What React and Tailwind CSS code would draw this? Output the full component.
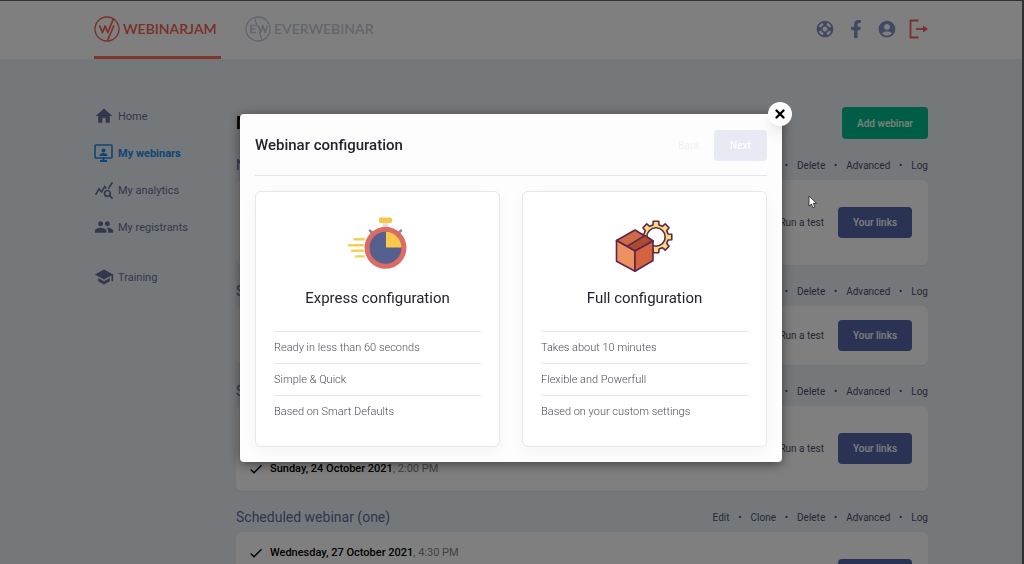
import { useState } from 'react';
import { X } from 'lucide-react';
import { FaFacebookF } from 'react-icons/fa';
import {
    MdHome,
    MdQueryStats,
    MdGroup,
    MdSchool,
    MdAccountCircle,
    MdSupport,
    MdCheck
} from 'react-icons/md';

const PresenterIcon = ({ className }) => (
    <svg className={className} viewBox="0 0 20 20" fill="none" stroke="currentColor">
        <rect x="1" y="2" width="17" height="13" rx="1" strokeWidth="1.6" />
        <circle cx="9.5" cy="7.4" r="2" fill="currentColor" stroke="none" />
        <path d="M5.5 13c0-2 2-3 4-3s4 1 4 3z" fill="currentColor" stroke="none" />
        <path d="M9.5 14v4M6 18h7" strokeWidth="2" />
    </svg>
);

const LogoutIcon = ({ className }) => (
    <svg className={className} viewBox="0 0 20 20" fill="none" stroke="currentColor" strokeWidth="1.8">
        <path d="M10.5 1.5h-8v17h8" strokeLinejoin="round" />
        <path d="M8 10h8" />
        <path d="M15 6.5l5 3.5-5 3.5z" fill="currentColor" stroke="none" />
    </svg>
);

const StopwatchIcon = () => (
    <svg className="h-14 w-16" viewBox="0 0 64 56">
        <g stroke="#f3cf56" strokeWidth="2.4" strokeLinecap="round">
            <path d="M8.5 23.3h9" />
            <path d="M3 29.3h14" />
            <path d="M6 34.8h11" />
            <path d="M10 40.4h7.5" />
        </g>
        <path d="M24 14.6l3 3M55 14.6l-3 3" stroke="#7d88a6" strokeWidth="2.6" strokeLinecap="round" />
        <rect x="36.6" y="5" width="5.8" height="7" fill="#e3dfe2" />
        <rect x="33" y="1.4" width="13" height="5.6" rx="1.6" fill="#f5c84c" />
        <circle cx="39.5" cy="31.8" r="21" fill="#dd6a63" />
        <circle cx="39.5" cy="31.8" r="16" fill="#56608f" />
        <path d="M40 31.4V15.8a16 16 0 0 1 15.5 15.6z" fill="#fbc84b" />
    </svg>
);

// eight square teeth around a ring
const gearPoints = () => {
    const points = [];
    for (let i = 0; i < 8; i++) {
        const base = (i * Math.PI) / 4 - Math.PI / 2;
        [[-0.25, 12.4], [-0.17, 16], [0.17, 16], [0.25, 12.4]].forEach(([offset, r]) => {
            points.push(`${43 + r * Math.cos(base + offset)},${21 + r * Math.sin(base + offset)}`);
        });
    }
    return points.join(' ');
};

const BoxIcon = () => (
    <svg className="h-14 w-16" viewBox="0 0 64 56" stroke="#5d2650" strokeWidth="1.6" strokeLinejoin="round">
        <polygon points={gearPoints()} fill="#fbdc77" />
        <circle cx="43" cy="21" r="9.2" fill="#fff" />
        <path d="M22 14L3.5 24.5 22 35l18-10z" fill="#cf6a43" />
        <path d="M32 19.4L14 30.5 22 35l18-10z" fill="#b04a2c" />
        <path d="M3.5 24.5v20.7L22 55.2V35z" fill="#ee9160" />
        <path d="M40 25v19.5L22 55.2V35z" fill="#d5633f" />
    </svg>
);

const LogoMark = ({ letters, className }) => (
    <svg className={className} viewBox="0 0 26 26" fill="none" stroke="currentColor">
        <circle cx="13" cy="13" r="12" strokeWidth="1.3" />
        {letters === 'W' ? (
            <>
                <path d="M5.5 9.5l3 7 2.7-6.5 2.6 6.5 5.7-14" strokeWidth="1.8" strokeLinejoin="round" />
                <path d="M13.5 24.5l6.5-15" strokeWidth="1.6" />
            </>
        ) : (
            <>
                <path d="M10.5 9.5H6v7h5M6 13h4.5" strokeWidth="1.7" />
                <path d="M13.5 9.5l2.2 7 2.2-7 2.2 7 2.2-7" strokeWidth="1.5" strokeLinejoin="round" />
                <path d="M9.5 2l3 9M14 16l3 8" strokeWidth="1.2" />
            </>
        )}
    </svg>
);

const navItems = [
    { label: 'Home', icon: MdHome },
    { label: 'My webinars', icon: PresenterIcon, active: true },
    { label: 'My analytics', icon: MdQueryStats },
    { label: 'My registrants', icon: MdGroup },
    { label: 'Training', icon: MdSchool, spaced: true }
];

const webinars = [
    { name: 'New product', dates: [['Friday, 22 October 2021', '1:00 PM']], tall: true },
    { name: 'Series', dates: [['Saturday, 23 October 2021', '5:00 PM']] },
    { name: 'Sales', dates: [['Saturday, 23 October 2021', '2:00 PM'], ['Saturday, 23 October 2021', '6:00 PM'], ['Sunday, 24 October 2021', '2:00 PM']] },
    { name: 'Scheduled webinar (one)', dates: [['Wednesday, 27 October 2021', '4:30 PM']], tall: true }
];

const actions = ['Edit', 'Clone', 'Delete', 'Advanced', 'Log'];

const options = [
    {
        title: 'Express configuration',
        icon: StopwatchIcon,
        features: ['Ready in less than 60 seconds', 'Simple & Quick', 'Based on Smart Defaults']
    },
    {
        title: 'Full configuration',
        icon: BoxIcon,
        features: ['Takes about 10 minutes', 'Flexible and Powerfull', 'Based on your custom settings']
    }
];

const Header = () => (
    <header className="bg-white px-4">
        <div className="mx-auto flex h-[58px] max-w-[834px] justify-between">
            <nav className="flex gap-6">
                <a href="#webinarjam" className="flex w-[127px] items-center gap-[3px] border-b-3 border-[#ff6a5c] font-[Lato] text-sm font-semibold text-[#f0604f]">
                    <LogoMark letters="W" className="h-[26px] w-[26px] shrink-0" />
                    WEBINARJAM
                </a>
                <a href="#everwebinar" className="flex items-center gap-[3px] border-b-3 border-transparent font-[Lato] text-sm font-semibold text-[#c6cadd]">
                    <LogoMark letters="EW" className="h-[26px] w-[26px] shrink-0" />
                    EVERWEBINAR
                </a>
            </nav>
            <div className="flex items-center gap-[11px] pb-0.5 text-[#8090c8]">
                <a href="#support" aria-label="Support"><MdSupport className="h-5 w-5" /></a>
                <a href="#facebook" aria-label="Facebook" className="flex w-5 justify-center"><FaFacebookF className="h-[18px] w-[18px]" /></a>
                <a href="#account" aria-label="Account"><MdAccountCircle className="h-5 w-5" /></a>
                <a href="#logout" aria-label="Log out" className="text-[#f0605c]"><LogoutIcon className="h-5 w-5" /></a>
            </div>
        </div>
    </header>
);

const Sidebar = () => (
    <nav className="w-[142px] shrink-0 pt-[39px]">
        <ul>
            {navItems.map(({ label, icon: Icon, active, spaced }) => (
                <li key={label} className={spaced ? 'mt-[13px]' : ''}>
                    <a
                        href="#"
                        className={`flex h-[37px] items-center gap-1 text-[11px] ${active ? 'font-bold text-[#1c8ae6]' : 'text-[#666f96]'}`}
                    >
                        <Icon className="mb-0.5 h-5 w-5" />
                        <span className="pt-0.5">{label}</span>
                    </a>
                </li>
            ))}
        </ul>
    </nav>
);

const WebinarRow = ({ name, dates, tall }) => (
    <section>
        <div className="flex h-[41px] items-center justify-between pt-[11px]">
            <h2 className="text-sm text-[#5d6aa0]">{name}</h2>
            <ul className="flex text-[10px] text-[#4a4f6c]">
                {actions.map((action, i) => (
                    <li key={action} className="flex">
                        {i > 0 && <span className="w-[21px] text-center">•</span>}
                        <a href="#">{action}</a>
                    </li>
                ))}
            </ul>
        </div>
        <div className={`flex items-center justify-between rounded-md bg-white px-4 shadow-xs ${tall ? 'min-h-[85px]' : 'min-h-[59px]'}`}>
            <ul className="-ml-1 self-start py-[11px]">
                {dates.map(([day, time]) => (
                    <li key={day + time} className="flex h-[21px] items-center gap-[6px] text-[11px] text-[#85858c]">
                        <MdCheck className="mb-0.5 h-4 w-4 text-black" />
                        <span><b className="font-medium text-black">{day}</b>, {time}</span>
                    </li>
                ))}
            </ul>
            <div className="flex items-center gap-[14px] text-[10px]">
                <a href="#" className="text-[#4a4f6c]">Run a test</a>
                <button className="h-[31px] w-[74px] rounded-sm bg-[#5466a8] font-medium text-white">Your links</button>
            </div>
        </div>
    </section>
);

const ConfigModal = ({ onClose }) => (
    <div className="fixed inset-0 flex items-start justify-center bg-black/50 pt-[114px] pr-[18px] pl-4">
        <div role="dialog" aria-label="Webinar configuration" className="relative w-full max-w-[542px] rounded-sm bg-[#fdfdfe] px-[15px] pb-[15px] shadow-[0_2px_12px_rgba(0,0,0,0.5)]">
            <button
                aria-label="Close"
                onClick={onClose}
                className="absolute -top-3 -right-[10px] flex h-6 w-6 items-center justify-center rounded-full bg-white text-black shadow-lg"
            >
                <X className="h-[14px] w-[14px]" strokeWidth={4} />
            </button>
            <div className="flex h-[62px] items-center justify-between border-b border-[#e3e4e8] pt-px">
                <h1 className="text-[15px] font-medium text-[#23232f]">Webinar configuration</h1>
                <div className="flex items-center gap-[14px] text-[10px]">
                    <button disabled className="text-[#f0f0f4]">Back</button>
                    <button disabled className="h-[31px] w-[53px] rounded-sm bg-[#e7eaf5] font-medium text-white">Next</button>
                </div>
            </div>
            <div className="grid grid-cols-2 gap-[22px] pt-[15px]">
                {options.map(({ title, icon: Icon, features }) => (
                    <article key={title} className="flex flex-col items-center rounded-md border border-[#e6e7eb] bg-white px-[18px] pt-6 pb-[19px] shadow-[0_4px_16px_rgba(0,0,0,0.04)]">
                        <Icon />
                        <h2 className="pt-4 pb-[23px] text-[15px] leading-5 text-[#23232f]">{title}</h2>
                        <ul className="w-full text-[11px] font-light text-[#4d4d57]">
                            {features.map((feature) => (
                                <li key={feature} className="flex h-8 items-center border-t border-[#e3e4e8] pt-0.5">{feature}</li>
                            ))}
                        </ul>
                    </article>
                ))}
            </div>
        </div>
    </div>
);

export default function App() {
    const [isModalOpen, setIsModalOpen] = useState(true);

    return (
        <div className="h-screen overflow-hidden border-t border-r-2 border-[#606064] bg-[#ebf1f6] font-[Roboto,sans-serif]">
            <Header />
            <div className="px-4">
                <div className="mx-auto flex max-w-[834px]">
                    <Sidebar />
                    <main className="min-w-0 grow pt-12">
                        <div className="flex items-center justify-between">
                            <h1 className="text-lg font-bold text-black">My webinars</h1>
                            <button
                                onClick={() => setIsModalOpen(true)}
                                className="h-8 w-[86px] rounded-sm bg-[#00bc8c] text-[10px] font-medium text-white"
                            >
                                Add webinar
                            </button>
                        </div>
                        {webinars.map((webinar) => (
                            <WebinarRow key={webinar.name} {...webinar} />
                        ))}
                    </main>
                </div>
            </div>

            {isModalOpen && <ConfigModal onClose={() => setIsModalOpen(false)} />}

            {/* pointer */}
            <svg className="absolute top-[195px] left-[808px] h-[14px] w-[10px]" viewBox="0 0 10 14">
                <path d="M1 1v10l2.4-2 1.6 3.8 1.8-.8-1.6-3.7h3.300z" fill="#fff" stroke="#222" strokeWidth="0.8" />
            </svg>
        </div>
    );
}
